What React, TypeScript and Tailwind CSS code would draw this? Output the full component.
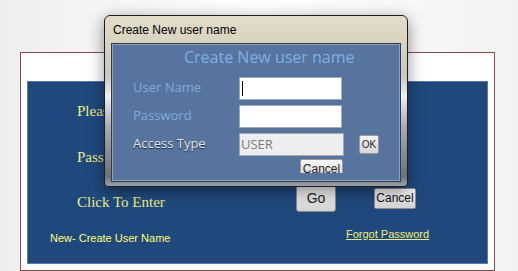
import React from "react";

export default function App() {
  return (
    <div className="relative w-[518px] h-[271px] overflow-hidden bg-gradient-to-r from-[#eeeeee] via-white to-[#f2f2f2]">
      {/* main frame */}
      <div className="ml-[20px] mt-[52px] w-[475px] h-[219px] border border-[#8a4a4a] bg-white px-[6px] pt-[28px] pb-[6px]">
        <div className="relative h-full bg-[#1f497d] border border-[#5d7ba3] font-['Liberation_Serif','DejaVu_Serif',serif] text-[15px] text-[#eeee80]">
          <div className="flex h-[26px] mt-[16px] items-center pl-[49px]">
            Please Enter User Name
          </div>
          <div className="flex h-[26px] mt-[20px] items-center pl-[49px]">
            Password
          </div>
          <div className="flex h-[28px] mt-[14px] items-center">
            <div className="pl-[49px] w-[268px] pt-[8px]">Click To Enter</div>
            <button className="w-[40px] h-[28px] rounded-[3px] border border-[#8c8c8c] bg-gradient-to-b from-[#f6f6f6] to-[#d4d4d4] text-[14px] text-[#222] font-['Liberation_Sans',Arial,sans-serif]">
              Go
            </button>
            <button className="ml-[38px] w-[42px] h-[21px] rounded-[2px] border border-[#8c8c8c] bg-gradient-to-b from-[#f6f6f6] to-[#d4d4d4] text-[12px] text-[#111] leading-none font-['Liberation_Sans',Arial,sans-serif]">
              Cancel
            </button>
          </div>
          <div className="flex mt-[14px] items-start font-['Liberation_Sans',Arial,sans-serif] text-[11px]">
            <div className="pl-[22px] w-[318px] pt-[4px] text-[#ffff70]">New- Create User Name</div>
            <a className="text-[#f0f070] underline">Forgot Password</a>
          </div>
        </div>
      </div>

      {/* dialog */}
      <div className="absolute left-[104px] top-[15px] w-[304px] h-[172px] rounded-t-[6px] rounded-b-[4px] border border-[#1e1e1e] shadow-[0_4px_16px_rgba(0,0,0,0.45)] bg-[linear-gradient(180deg,#e3ddcc_0px,#d8d2bf_28px,#c9c6bc_60px,#eeeeee_80px,#a9adb3_110px,#6b7077_160px,#9aa0a8_170px)] px-[6px] pb-[4px] flex flex-col">
        <div className="h-[27px] flex items-center pl-[2px] text-[12px] text-black font-['Liberation_Sans',Arial,sans-serif]">
          Create New user name
        </div>
        <div className="flex-1 border border-[#2f3c50] bg-[#56749e] shadow-[inset_0_0_0_1px_#8ea2be] overflow-hidden font-['Open_Sans','Noto_Sans',sans-serif] text-[13px]">
          <div className="pl-[72px] mt-[2px] text-[16px] text-[#80b0e4] leading-[22px]">
            Create New user name
          </div>
          <div className="flex items-center mt-[9px] h-[23px]">
            <div className="w-[127px] pl-[21px] pb-[2px] text-[#82abd9]">User Name</div>
            <div className="relative w-[103px] h-[23px] bg-white border border-[#a3aab5]">
              <div className="absolute left-[2px] top-[3px] w-[1px] h-[15px] bg-black" />
            </div>
          </div>
          <div className="flex items-center mt-[5px] h-[23px]">
            <div className="w-[127px] pl-[21px] pb-[2px] text-[#82abd9]">Password</div>
            <div className="w-[103px] h-[23px] bg-white border border-[#a3aab5]" />
          </div>
          <div className="flex items-center mt-[5px] h-[23px]">
            <div className="w-[127px] pl-[21px] pb-[2px] text-[#e2e6ec] [text-shadow:0_1px_1px_#1d2a3c]">Access Type</div>
            <div className="w-[105px] h-[23px] bg-[#eeeeee] border border-[#a3aab5] flex items-center pl-[1px] text-[#7a7a7a]">USER</div>
            <button className="ml-[15px] w-[20px] h-[19px] rounded-[2px] border border-[#9a9a9a] bg-gradient-to-b from-[#f7f7f7] to-[#d6d6d6] text-[10px] text-[#222] leading-none font-['Liberation_Sans',Arial,sans-serif]">OK</button>
          </div>
          <div className="h-[14px] mt-[3px] overflow-hidden pl-[188px]">
            <button className="w-[43px] h-[18px] rounded-[2px] border border-[#9a9a9a] bg-gradient-to-b from-[#f7f7f7] to-[#d6d6d6] text-[12px] text-[#222] leading-[18px] font-['Liberation_Sans',Arial,sans-serif]">Cancel</button>
          </div>
        </div>
      </div>
    </div>
  );
}
